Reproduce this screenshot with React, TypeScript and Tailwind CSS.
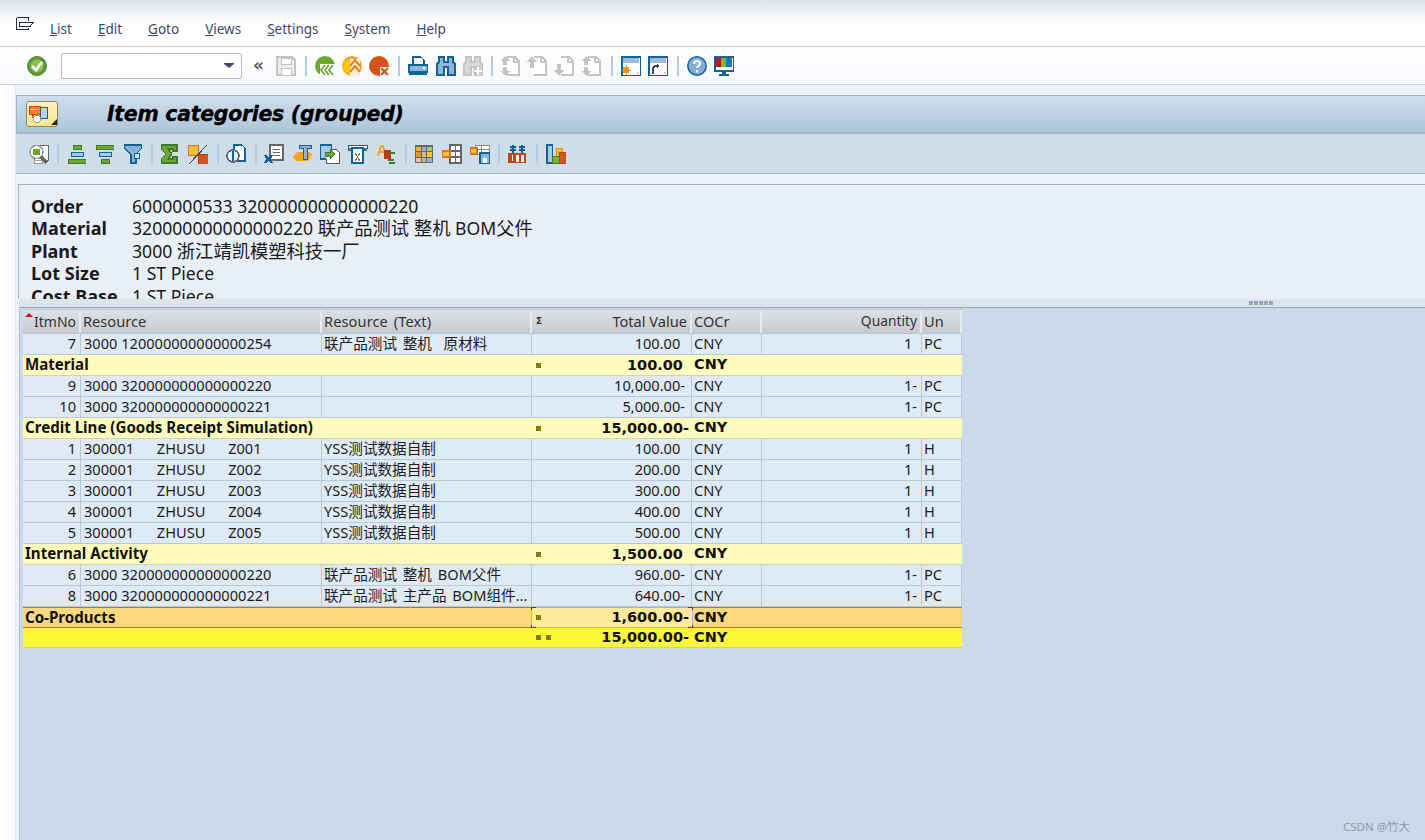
import type { ReactNode } from "react";

const cjk = "font-['Noto_Sans','Noto_Sans_CJK_SC',sans-serif]";

function Ico({ children, w = 20 }: { children: ReactNode; w?: number }) {
  return (
    <svg width={w} height="20" viewBox={`0 0 ${w} 20`} className="shrink-0" shapeRendering="crispEdges">
      {children}
    </svg>
  );
}

const Sep = () => <div className="w-[2px] h-[20px] bg-[#b4cbe0] shrink-0" />;

const blue = "#0a6496";
const green = "#6da72f";
const dgreen = "#3f7a2a";
const gray = "#c4c4c4";

function Round({ fill, children }: { fill: string; children?: ReactNode }) {
  return (
    <svg width="20" height="20" viewBox="0 0 20 20" className="shrink-0">
      <circle cx="10" cy="10" r="10" fill={fill} />
      {children}
    </svg>
  );
}

function PageGray({ up, down }: { up?: boolean; down?: boolean }) {
  const both = up && down;
  return (
    <Ico>
      <path d="M7 1h8l4 4v14H7" fill="#fff" stroke={gray} strokeWidth="1.5" />
      <path d="M14 1v5h5" fill="none" stroke={gray} strokeWidth="1.2" />
      {up && <path d={both ? "M0 5l5-5 5 5H7v4H3V5z" : "M0 6l5-6 5 6H7v6H3V6z"} fill={gray} />}
      {down && <path d={both ? "M0 15l5 5 5-5H7v-4H3v4z" : "M0 14l5 6 5-6H7V8H3v6z"} fill={gray} />}
    </Ico>
  );
}

function Binoculars({ c, plus }: { c: string; plus?: boolean }) {
  return (
    <Ico>
      <path d="M3 1h5v5h4V1h5v5l2 2v11h-7V11H8v8H1V8l2-2z" fill={plus ? "#d8d8d8" : "#8fb4d6"} stroke={c} strokeWidth="1.5" />
      {plus && <path d="M10 13h3v-3h3v3h3v3h-3v3h-3v-3h-3z" fill="#fff" stroke={c} />}
    </Ico>
  );
}

function Win({ children }: { children: ReactNode }) {
  return (
    <Ico>
      <rect x="0.75" y="0.75" width="18.5" height="18.5" fill="#fff" stroke={blue} strokeWidth="1.5" />
      <rect x="2" y="2" width="16" height="5" fill="#9dbbd8" />
      <rect x="16" y="16" width="2" height="2" fill="#c9d6e2" />
      {children}
    </Ico>
  );
}

function Grid3({ x = 8 }: { x?: number }) {
  return (
    <g>
      <rect x={x} y="1" width="11" height="18" fill="#fff" stroke="#666" strokeWidth="1.5" />
      <path d={`M${x + 5.5} 1v18M${x} 7h11M${x} 13h11`} stroke="#666" strokeWidth="1.2" />
    </g>
  );
}

function MainToolbar() {
  return (
    <div className="h-[38px] flex items-center pl-[27px] bg-gradient-to-b from-white to-[#f6f8fb] border-b border-[#cdd3dc] shrink-0">
      <svg width="20" height="20" viewBox="0 0 20 20" className="shrink-0">
        <circle cx="10" cy="10" r="9.5" fill="#5d9a35" stroke="#4d8630" />
        <circle cx="10" cy="10" r="6.5" fill="#8cc152" />
        <path d="M5 10l4 4 6-8" fill="none" stroke="#fff" strokeWidth="2.6" />
      </svg>
      <div className="ml-[14px] w-[181px] h-[26px] bg-white border border-[#b5b8bc] rounded-[2px] flex items-center justify-end pr-[7px]">
        <svg width="10" height="5" viewBox="0 0 10 5">
          <path d="M0 0h10v1L5 5 0 1z" fill="#3b4a6b" />
        </svg>
      </div>
      <div className="ml-[11px] w-[12px] text-[#555] text-[17px] leading-none font-bold font-['DejaVu_Sans',sans-serif]">«</div>
      <div className="ml-[11px]">
        <Ico>
          <path d="M1 1h15l3 3v15H1z" fill="#ededed" stroke={gray} strokeWidth="1.5" />
          <rect x="5" y="2" width="10" height="6" fill="#fff" stroke={gray} />
          <rect x="5" y="12" width="10" height="7" fill="#fff" stroke={gray} />
        </Ico>
      </div>
      <div className="ml-[9px]"><Sep /></div>
      <div className="ml-[8px] flex items-center gap-[7px]">
        <Round fill="#6da72f">
          <rect x="5" y="8" width="15" height="12" fill="#fff" />
          <path d="M10 9l-4 5 4 5M14 9l-4 5 4 5M18 9l-4 5 4 5" fill="none" stroke="#6da72f" strokeWidth="1.8" />
        </Round>
        <Round fill="#f5a623">
          <circle cx="8" cy="10" r="7" fill="#fdc413" />
          <rect x="8" y="3" width="10" height="17" fill="#f7f0e0" />
          <path d="M8 10l5-6 5 6M8 16l5-6 5 6" fill="none" stroke="#ea7a1e" strokeWidth="2" />
        </Round>
        <Round fill="#d4541c">
          <rect x="11" y="11" width="9" height="9" fill="#fff" />
          <path d="M12 12l7 7M19 12l-7 7" stroke="#d4541c" strokeWidth="2.2" />
        </Round>
      </div>
      <div className="ml-[9px]"><Sep /></div>
      <div className="ml-[8px] flex items-center">
        <Ico>
          <path d="M5 1h8l3 3v5H5z" fill="#fff" stroke={blue} strokeWidth="1.4" />
          <rect x="0.75" y="9" width="18.5" height="7" fill="#8fb4d6" stroke={blue} strokeWidth="1.5" />
          <rect x="1" y="16" width="18" height="3" fill={blue} />
          <rect x="15" y="11" width="2" height="2" fill="#fff" />
        </Ico>
        <div className="ml-[8px]"><Binoculars c={blue} /></div>
        <div className="ml-[7px]"><Binoculars c={gray} plus /></div>
      </div>
      <div className="ml-[8px]"><Sep /></div>
      <div className="ml-[7px] flex items-center gap-[7px]">
        <PageGray up down />
        <PageGray up />
        <PageGray down />
        <PageGray up down />
      </div>
      <div className="ml-[10px]"><Sep /></div>
      <div className="ml-[8px] flex items-center gap-[7px]">
        <Win>
          <circle cx="5" cy="14" r="3.2" fill="#f9a81a" />
          <path d="M5 9v10M0.5 14h9M2 11l6 6M8 11l-6 6" stroke="#f08a00" strokeWidth="1" />
        </Win>
        <Win>
          <path d="M5 18v-6l2-2h4" fill="none" stroke="#444" strokeWidth="2" />
          <path d="M9 8l3 2-3 2z" fill="#444" />
        </Win>
      </div>
      <div className="ml-[9px]"><Sep /></div>
      <div className="ml-[8px] flex items-center gap-[7px]">
        <svg width="20" height="20" viewBox="0 0 20 20" className="shrink-0">
          <circle cx="10" cy="10" r="9.2" fill="#86aed2" stroke={blue} strokeWidth="1.5" />
          <path d="M7 8c0-4 6-4 6 0 0 2-3 2-3 4" fill="none" stroke="#fff" strokeWidth="2" />
          <rect x="9" y="14" width="2" height="2.4" fill="#fff" />
        </svg>
        <Ico>
          <rect x="0.75" y="0.75" width="18.5" height="14" fill="#fff" stroke={blue} strokeWidth="1.5" />
          <rect x="2" y="2" width="5" height="9" fill="#cc1111" />
          <rect x="7" y="2" width="5" height="9" fill="#7db52e" />
          <rect x="12" y="2" width="6" height="9" fill="#0a7cc4" />
          <rect x="8" y="15" width="4" height="3" fill={blue} />
          <rect x="5" y="18" width="10" height="2" fill={blue} />
        </Ico>
      </div>
    </div>
  );
}

function AppToolbar() {
  return (
    <div className="h-[41px] flex items-center pl-[13px] bg-[#cfdde9] border-y border-[#a9bace] shrink-0">
      <Ico>
        <rect x="5" y="1" width="14" height="15" fill="#fff" stroke="#666" />
        <circle cx="7.5" cy="8" r="6.5" fill="#fff" stroke="#999" strokeWidth="1.5" />
        <rect x="4" y="5" width="7" height="6" fill={green} />
        <path d="M12 13l6 6" stroke="#666" strokeWidth="3" />
        <rect x="5" y="16" width="8" height="3" fill="#fff" stroke="#666" strokeWidth="0.6" />
      </Ico>
      <div className="ml-[8px]"><Sep /></div>
      <div className="ml-[9px] flex items-center gap-[10px]">
        <Ico w={18}>
          <rect x="5" y="1" width="8" height="4" fill={green} stroke={dgreen} />
          <rect x="3" y="8" width="12" height="4" fill="#a9c8e4" stroke={blue} />
          <rect x="0" y="15" width="18" height="4" fill={green} stroke={dgreen} />
        </Ico>
        <Ico w={18}>
          <rect x="0" y="1" width="18" height="4" fill={green} stroke={dgreen} />
          <rect x="3" y="8" width="12" height="4" fill="#a9c8e4" stroke={blue} />
          <rect x="5" y="15" width="8" height="4" fill={green} stroke={dgreen} />
        </Ico>
        <Ico w={18}>
          <path d="M0 1h18v3l-6 6v9H7v-9L0 4z" fill="#8ab3d6" stroke={blue} strokeWidth="1.4" />
          <circle cx="13" cy="12" r="3" fill="#cfdde9" stroke={blue} />
        </Ico>
      </div>
      <div className="ml-[9px]"><Sep /></div>
      <div className="ml-[8px]">
        <Ico w={17}>
          <path d="M0 1h16v6h-4V5H7l4 5-4 5h5v-2h4v6H0v-4l5-5-5-5z" fill={green} stroke={dgreen} strokeWidth="1.2" />
        </Ico>
      </div>
      <div className="ml-[10px]">
        <Ico>
          <rect x="0" y="1" width="10" height="10" fill="#fbbf3c" stroke="#e2711d" />
          <rect x="10" y="10" width="10" height="10" fill="#d4541c" stroke="#a83d12" />
          <path d="M1 20L19 1" stroke="#444" strokeWidth="1" />
        </Ico>
      </div>
      <div className="ml-[9px]"><Sep /></div>
      <div className="ml-[7px]">
        <Ico>
          <path d="M8 1h8l3 3v13H8z" fill="#fff" stroke={blue} strokeWidth="1.4" />
          <circle cx="7" cy="12" r="6" fill="#e8f0f7" stroke="#666" strokeWidth="1.6" />
          <path d="M7 7v10" stroke={blue} strokeWidth="1.5" />
        </Ico>
      </div>
      <div className="ml-[9px]"><Sep /></div>
      <div className="ml-[7px] flex items-center gap-[8px]">
        <Ico>
          <rect x="6" y="1" width="13" height="15" fill="#fff" stroke="#666" strokeWidth="1.4" />
          <path d="M9 5h7M9 8h7M9 11h7" stroke="#666" />
          <path d="M1 11l7 8M8 11l-7 8" stroke={blue} strokeWidth="2.6" />
        </Ico>
        <Ico>
          <path d="M0 13l6-5h12l2 3-4 6H5z" fill="#f6a81c" />
          <path d="M7 1h12v3h-4v11h-4V4H7z" fill="#8fb4d6" stroke={blue} />
        </Ico>
        <Ico>
          <rect x="0.75" y="1" width="11" height="14" fill="#a9c8e4" stroke={blue} strokeWidth="1.4" />
          <path d="M12 5h4l3 3v11H6v-4" fill="#fff" stroke="#555" />
          <path d="M5 8h5V5l5 5-5 5v-3H5z" fill={green} stroke={dgreen} />
        </Ico>
        <Ico>
          <rect x="0" y="1" width="19" height="3" fill="#fff" stroke={blue} />
          <rect x="0" y="4" width="19" height="3" fill="#666" />
          <rect x="4" y="4" width="11" height="15" fill="#fff" stroke={blue} strokeWidth="1.6" />
          <path d="M7 9l5 8M12 9l-5 8" stroke="#666" />
        </Ico>
        <Ico>
          <path d="M2 12l3-10h2l3 10M3 8h6" fill="none" stroke="#f5a81c" strokeWidth="2" />
          <rect x="8" y="6" width="7" height="9" fill="#b33c14" />
          <path d="M13 9h6M12 16h6M13 19h6" stroke={dgreen} strokeWidth="2" />
        </Ico>
      </div>
      <div className="ml-[9px]"><Sep /></div>
      <div className="ml-[7px] flex items-center gap-[8px]">
        <Ico>
          <rect x="0.75" y="1" width="18.5" height="18" fill="#666" />
          {[
            ["#f5b324", "#93b4d4", "#a3c66f"],
            ["#ef8f1c", "#dcb49a", "#f9c82a"],
            ["#eeb7ae", "#a8c488", "#93b4d4"],
          ].map((r, i) =>
            r.map((c, j) => <rect key={`${i}${j}`} x={2 + j * 5.5} y={2.5 + i * 5.5} width="4.6" height="4.6" fill={c} />),
          )}
        </Ico>
        <Ico>
          <Grid3 />
          <rect x="0" y="7" width="8" height="6" fill="#fbc02d" stroke="#e2711d" strokeWidth="1.4" />
        </Ico>
        <Ico>
          <rect x="5" y="1" width="14" height="9" fill="#fff" stroke="#888" />
          <path d="M11 1v9M5 5h14" stroke="#888" />
          <rect x="0" y="4" width="7" height="6" fill="#fbc02d" stroke="#e2711d" strokeWidth="1.4" />
          <rect x="10" y="9" width="10" height="11" fill="#8fb4d6" stroke={blue} strokeWidth="1.4" />
          <rect x="13" y="14" width="4" height="5" fill="#fff" />
        </Ico>
      </div>
      <div className="ml-[8px]"><Sep /></div>
      <div className="ml-[8px]">
        <Ico w={18}>
          <path d="M2 3h6M5 1v8M2 6h6M11 3h6M14 1v8M11 6h6" stroke={blue} strokeWidth="1.6" />
          <rect x="0" y="9" width="18" height="10" fill="#c4441a" />
          <path d="M4 11v6M8 11h2v6H8zM13 11h2v6h-2z" fill="#fff" stroke="#fff" />
        </Ico>
      </div>
      <div className="ml-[10px]"><Sep /></div>
      <div className="ml-[8px]">
        <Ico>
          <rect x="0.75" y="1" width="5.5" height="18" fill="#a9c8e4" stroke={blue} strokeWidth="1.5" />
          <rect x="10" y="4" width="6" height="8" fill="#fbc02d" stroke="#f08a00" />
          <rect x="13" y="8" width="7" height="11" fill="#d9541c" stroke="#b33c14" />
          <rect x="6" y="12" width="7" height="7" fill="#7db52e" stroke={dgreen} />
        </Ico>
      </div>
    </div>
  );
}

type Row = { kind: "item" | "sub" | "co" | "total"; no?: string; res?: string; text?: string; label?: string; val: string; qty?: string; un?: string };

const rows: Row[] = [
  { kind: "item", no: "7", res: "3000 120000000000000254", text: "联产品测试 整机  原材料", val: "100.00", qty: "1", un: "PC" },
  { kind: "sub", label: "Material", val: "100.00" },
  { kind: "item", no: "9", res: "3000 320000000000000220", val: "10,000.00-", qty: "1-", un: "PC" },
  { kind: "item", no: "10", res: "3000 320000000000000221", val: "5,000.00-", qty: "1-", un: "PC" },
  { kind: "sub", label: "Credit Line (Goods Receipt Simulation)", val: "15,000.00-" },
  ...["1", "2", "3", "4", "5"].map<Row>((n) => ({
    kind: "item",
    no: n,
    res: `300001      ZHUSU      Z00${n}`,
    text: "YSS测试数据自制",
    val: `${n}00.00`,
    qty: "1",
    un: "H",
  })),
  { kind: "sub", label: "Internal Activity", val: "1,500.00" },
  { kind: "item", no: "6", res: "3000 320000000000000220", text: "联产品测试 整机 BOM父件", val: "960.00-", qty: "1-", un: "PC" },
  { kind: "item", no: "8", res: "3000 320000000000000221", text: "联产品测试 主产品 BOM组件...", val: "640.00-", qty: "1-", un: "PC" },
  { kind: "co", label: "Co-Products", val: "1,600.00-" },
  { kind: "total", val: "15,000.00-" },
];

const cols = "grid grid-cols-[58px_241px_210px_160px_70px_160px_40px]";
const cellB = "border-r border-b border-[#b9c8d8] overflow-hidden";
const dot = <span className="w-[5px] h-[5px] bg-[#857c0e] inline-block" />;

function DataRow({ r }: { r: Row }) {
  if (r.kind === "item") {
    return (
      <div className={`${cols} h-[21px] bg-[#deeaf5] text-[14.6px] leading-[18px] text-[#1c1c1c]`}>
        <div className={`${cellB} text-right pr-[4px] bg-[#e0eaf4]`}>{r.no}</div>
        <div className={`${cellB} pl-[3px] whitespace-pre`}>{r.res}</div>
        <div className={`${cellB} pl-[2px] whitespace-pre [word-spacing:2px]`}>{r.text}</div>
        <div className={`${cellB} text-right pr-[6px]`}>{r.val.endsWith("-") ? r.val : <>{r.val}<span className="invisible">-</span></>}</div>
        <div className={`${cellB} pl-[2px]`}>CNY</div>
        <div className={`${cellB} text-right pr-[4px]`}>{r.qty}{r.qty === "1" && <span className="invisible">-</span>}</div>
        <div className={`${cellB} pl-[2px]`}>{r.un}</div>
      </div>
    );
  }
  const bg =
    r.kind === "sub"
      ? "bg-[#fffbbc] border-b border-[#d0d3b8]"
      : r.kind === "co"
        ? "bg-[#fdd97e] border-y border-[#cf6f1d]"
        : "bg-[#fff83a] border-b border-[#bfc8cf]";
  const h = r.kind === "total" ? "h-[20px]" : "h-[21px]";
  return (
    <div className={`${cols} ${h} ${bg} text-[#111] font-bold items-stretch`}>
      <div className="col-span-3 pl-[2px] text-[15.1px] leading-[18px]">{r.label}</div>
      <div
        className={`flex items-center justify-between pl-[4px] pr-[3px] ${
          r.kind === "co" ? "relative bg-[#feea9a] outline outline-1 outline-[#a9b4c4]" : ""
        }`}
      >
        {r.kind === "co" && (
          <>
            <span className="absolute -left-px -top-px w-[5px] h-[3px] border-l border-t border-[#a01a2a]" />
            <span className="absolute -right-px -top-px w-[5px] h-[3px] border-r border-t border-[#a01a2a]" />
            <span className="absolute -left-px -bottom-px w-[5px] h-[3px] border-l border-b border-[#a01a2a]" />
            <span className="absolute -right-px -bottom-px w-[5px] h-[3px] border-r border-b border-[#a01a2a]" />
          </>
        )}
        <span className="flex gap-[5px]">
          {dot}
          {r.kind === "total" && dot}
        </span>
        <span className="text-[14.5px] leading-[19px] font-['DejaVu_Sans',sans-serif]">
          {r.val.endsWith("-") ? r.val : <>{r.val}<span className="invisible">-</span></>}
        </span>
      </div>
      <div className="col-span-3 pl-[2px] text-[14.5px] leading-[19px] font-['DejaVu_Sans',sans-serif]">CNY</div>
    </div>
  );
}

function HeadCell({ children, right, w }: { children: ReactNode; right?: boolean; w?: string }) {
  return (
    <div
      className={`${w ?? ""} border-r-2 border-[#e8ebee] flex items-center ${right ? "justify-end pr-[3px]" : "pl-[2px]"} relative`}
    >
      {children}
    </div>
  );
}

const Zh = ({ children }: { children: ReactNode }) => <span className="text-[18.3px]">{children}</span>;

export default function App() {
  const info: [string, ReactNode][] = [
    ["Order", "6000000533 320000000000000220"],
    ["Material", <>320000000000000220 <Zh>联产品测试 整机</Zh> BOM<Zh>父件</Zh></>],
    ["Plant", <>3000 <Zh>浙江靖凯模塑科技一厂</Zh></>],
    ["Lot Size", "1 ST Piece"],
    ["Cost Base", "1 ST Piece"],
  ];
  return (
    <div className={`w-[1425px] h-[840px] overflow-hidden relative flex flex-col bg-[#eef3f9] ${cjk}`}>
      <div className="h-[47px] shrink-0 flex bg-gradient-to-b from-[#dbe4ef] via-white to-white border-b border-[#c5cad3] relative">
        <svg width="18" height="14" viewBox="0 0 18 14" className="ml-[16px] mt-[17px] shrink-0" shapeRendering="crispEdges">
          <path d="M0.5 0.5h12v3M0.5 0.5v12h12v-2M3 5.5h14l-3 4H3z" fill="none" stroke="#1c2a5a" />
        </svg>
        <div className="ml-[16px] mt-[19px] flex gap-[26px] text-[13.5px] leading-[20px] text-[#3b4a6b]">
          {["List", "Edit", "Goto", "Views", "Settings", "System", "Help"].map((m) => (
            <span key={m}>
              <span className="underline">{m[0]}</span>
              {m.slice(1)}
            </span>
          ))}
        </div>
      </div>
      <MainToolbar />

      <div className="flex-1 flex min-h-0 pt-[10px]">
        <div className="w-[16px] shrink-0 -mt-[10px] bg-gradient-to-r from-white to-[#f7f8fa] border-r border-[#e3e8ee]" />
        <div className="flex-1 min-w-0 flex flex-col">
          <div className="h-[38px] shrink-0 border border-r-0 border-[#a3b2c4] bg-gradient-to-b from-[#cfdfec] to-[#aec5da] flex items-center pl-[9px]">
            <div className="w-[32px] h-[26px] rounded-[3px] border border-[#8a8a6a] bg-gradient-to-b from-[#fff3bd] to-[#fbe48a] flex items-center">
              <svg width="20" height="20" viewBox="0 0 20 20" className="ml-[1px]" shapeRendering="crispEdges">
                <path d="M1 2h11v8H6l-2 4v-4H1z" fill="#f58220" stroke="#c9471c" />
                <path d="M3 5h2M6 5h2M9 5h1" stroke="#fff3bd" />
                <rect x="12" y="3" width="7" height="11" fill="#bcd4ea" stroke={blue} />
                <circle cx="9" cy="15" r="3.5" fill="#fff" stroke="#999" />
              </svg>
              <svg width="6" height="6" viewBox="0 0 6 6" className="ml-[3px] mt-[16px]">
                <path d="M6 0v6H0z" fill="#222" />
              </svg>
            </div>
            <div className="ml-[49px] text-[20.5px] leading-none font-bold italic text-black font-['DejaVu_Sans',sans-serif] tracking-[-0.3px] [-webkit-text-stroke:0.3px_#000]">
              Item categories (grouped)
            </div>
          </div>
          <AppToolbar />

          <div className="h-[10px] shrink-0" />
          <div className="ml-[2px] h-[115px] shrink-0 bg-[#e8eff7] border-t border-l border-[#a3b2c4] overflow-hidden pl-[12px] pt-[9.6px] text-[17.6px] leading-[22.5px] text-[#1a1a1a]">
            {info.map(([k, v]) => (
              <div key={k} className="flex whitespace-pre h-[22.5px]">
                <span className="w-[101px] font-bold text-[18px]">{k}</span>
                <span>{v}</span>
              </div>
            ))}
          </div>
          <div className="ml-[3px] h-[9px] shrink-0 bg-[#dbe5ec] border-b border-[#98a3b3] flex justify-end items-center pr-[152px]">
            <div className="flex gap-[1px]">
              {[0, 1, 2, 3, 4].map((i) => (
                <span key={i} className="w-[4px] h-[4px] bg-[#98a6b8]" />
              ))}
            </div>
          </div>
          <div className="ml-[3px] flex-1 min-h-0 bg-[#cbdaea] border-l border-[#b3c0cf] pl-[3px] pt-[1px]">
            <div className="w-[939px] border-t border-[#b9c8d8]">
              <div className={`${cols} h-[23px] bg-gradient-to-b from-[#dee1e5] to-[#c7cbd1] text-[14.6px] text-[#333]`}>
                <HeadCell right>
                  <svg width="8" height="4" viewBox="0 0 8 4" className="absolute left-[2px] top-[3px]">
                    <path d="M0 4l4-4 4 4z" fill="#c01818" />
                  </svg>
                  <span className="text-[14px]">ItmNo</span>
                </HeadCell>
                <HeadCell>Resource</HeadCell>
                <HeadCell>
                  <span className="[word-spacing:2px] tracking-[0.1px]">Resource (Text)</span>
                </HeadCell>
                <div className="border-r-2 border-[#e8ebee] flex items-center justify-between pl-[4px] pr-[3px]">
                  <span className="text-[9px] font-bold font-['DejaVu_Sans',sans-serif]">Σ</span>
                  <span>Total Value</span>
                </div>
                <HeadCell>COCr</HeadCell>
                <HeadCell right>
                  <span className="text-[13.8px]">Quantity</span>
                </HeadCell>
                <HeadCell>Un</HeadCell>
              </div>
              <div className="border-t border-[#b9c8d8]">
                {rows.map((r, i) => (
                  <DataRow key={i} r={r} />
                ))}
              </div>
            </div>
          </div>
        </div>
      </div>
      <div className="absolute right-[15px] bottom-[8px] text-[11.5px] leading-none text-[#8a97a5]">CSDN @竹大</div>
    </div>
  );
}
